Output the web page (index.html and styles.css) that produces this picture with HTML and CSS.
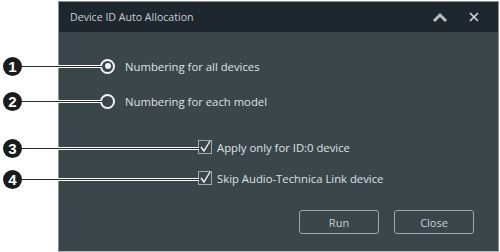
FILE: index.html
```html
<!DOCTYPE html>
<html lang="en">

<head>
  <meta charset="UTF-8" />
  <title>Device ID Auto Allocation</title>
  <link rel="stylesheet" href="styles.css">
</head>

<body>
  <div class="figure">
    <div class="dialog">
      <div class="titlebar">
        <span class="title">Device ID Auto Allocation</span>
        <div class="title-buttons">
          <svg class="icon" width="16" height="12" viewBox="0 0 16 12">
            <path d="M2 10 L8 4 L14 10" fill="none" stroke="#b9bec2" stroke-width="3" />
          </svg>
          <svg class="icon" width="12" height="12" viewBox="0 0 12 12">
            <path d="M2 2 L10 10 M10 2 L2 10" fill="none" stroke="#d6dadd" stroke-width="1.6" />
          </svg>
        </div>
      </div>

      <div class="content">
        <div class="option radio-row">
          <span class="radio checked"></span>
          <span class="label">Numbering for all devices</span>
        </div>
        <div class="option radio-row second">
          <span class="radio"></span>
          <span class="label">Numbering for each model</span>
        </div>
        <div class="option check-row">
          <span class="checkbox">
            <svg width="14" height="14" viewBox="0 0 14 14">
              <path d="M3 7 L6 11 L12 1" fill="none" stroke="#f2f4f5" stroke-width="1.4" />
            </svg>
          </span>
          <span class="label">Apply only for ID:0 device</span>
        </div>
        <div class="option check-row fourth">
          <span class="checkbox">
            <svg width="14" height="14" viewBox="0 0 14 14">
              <path d="M3 7 L6 11 L12 1" fill="none" stroke="#f2f4f5" stroke-width="1.4" />
            </svg>
          </span>
          <span class="label">Skip Audio-Technica Link device</span>
        </div>

        <div class="footer">
          <button>Run</button>
          <button>Close</button>
        </div>
      </div>
    </div>

    <!-- callouts -->
    <div class="callout" style="top: 57px;"><span class="num">1</span><span class="line" style="width: 80px;"></span></div>
    <div class="callout" style="top: 92px;"><span class="num">2</span><span class="line" style="width: 80px;"></span></div>
    <div class="callout" style="top: 139px;"><span class="num">3</span><span class="line" style="width: 177px;"></span></div>
    <div class="callout" style="top: 170px;"><span class="num">4</span><span class="line" style="width: 177px;"></span></div>
  </div>
</body>

</html>
```

FILE: styles.css
```css
body {
  margin: 0;
  padding: 0;
  background: #fff;
  font-family: 'Open Sans', 'Noto Sans', sans-serif;
}

.figure {
  position: relative;
  width: 500px;
  height: 252px;
  overflow: hidden;
}

.dialog {
  margin: 1px 0 0 58px;
  width: 441px;
  height: 251px;
  box-sizing: border-box;
  border: 1px solid #8d9397;
  border-bottom-color: #b4b8bb;
  background: #3b464b;
  display: flex;
  flex-direction: column;
}

.titlebar {
  height: 30px;
  background: #1e272e;
  display: flex;
  align-items: center;
  justify-content: space-between;
  padding: 0 18px 0 11px;
}

.title {
  font-size: 10.6px;
  color: #c8cdd1;
}

.title-buttons {
  display: flex;
  align-items: center;
  gap: 20px;
}

.content {
  flex: 1;
  position: relative;
}

.option {
  display: flex;
  align-items: center;
  font-size: 11.3px;
  color: #dde2e5;
}

.radio-row {
  margin: 26px 0 0 41px;
  height: 16px;
}

.radio-row.second {
  margin-top: 19px;
}

.radio {
  width: 11px;
  height: 11px;
  border: 2px solid #f0f2f3;
  border-radius: 50%;
  margin-right: 10px;
  position: relative;
}

.radio.checked::after {
  content: "";
  position: absolute;
  left: 2.5px;
  top: 2.5px;
  width: 6px;
  height: 6px;
  border-radius: 50%;
  background: #f0f2f3;
}

.check-row {
  margin: 30px 0 0 139px;
  height: 16px;
}

.check-row.fourth {
  margin-top: 15px;
}

.checkbox {
  width: 14px;
  height: 14px;
  border: 1px solid #a3a9ad;
  box-sizing: border-box;
  margin-right: 5px;
  display: flex;
}

.checkbox svg {
  margin: -1px;
}

.footer {
  display: flex;
  justify-content: flex-end;
  gap: 15px;
  margin: 24px 24px 0 0;
}

button {
  width: 80px;
  height: 24px;
  background: transparent;
  border: 1px solid #9ea5a9;
  border-radius: 3px;
  color: #c3d1dd;
  font-family: 'Open Sans', 'Noto Sans', sans-serif;
  font-size: 11px;
  padding: 0;
}

.callout {
  position: absolute;
  left: 3px;
  display: flex;
  align-items: center;
}

.num {
  width: 19px;
  height: 19px;
  border-radius: 50%;
  background: #1b1b1b;
  color: #fff;
  font-family: 'Liberation Sans', sans-serif;
  font-weight: bold;
  font-size: 15px;
  display: flex;
  align-items: center;
  justify-content: center;
}

.num::first-letter {
  letter-spacing: 0;
}

.line {
  height: 1px;
  background: #2a2a2a;
  box-shadow: 0 1px 0 #fff, 0 -1px 0 #fff;
}
```
